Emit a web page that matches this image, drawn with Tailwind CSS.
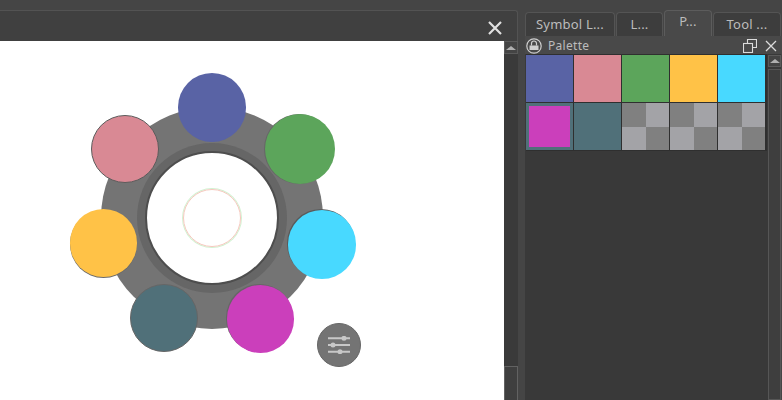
<!DOCTYPE html>
<html lang="en">
<head>
    <meta charset="UTF-8">
    <title>Palette</title>
    <script src="https://cdn.jsdelivr.net/npm/@tailwindcss/browser@4"></script>
</head>
<body class="bg-[#454545] overflow-hidden">
    <div class="w-[782px] h-[400px] flex pt-[10px] font-['Noto_Sans',sans-serif] text-[#bcbcbc]">
        <!-- Left document -->
        <div class="w-[518px] flex flex-col">
            <div class="h-[31px] shrink-0 flex items-center justify-end pr-[14px] bg-[#404040] border-t border-r border-[#535353] rounded-tr-[3px]">
                <svg class="w-[16px] h-[16px] mt-[3px]" viewBox="0 0 16 16"><path d="M2 2L14 14M14 2L2 14" stroke="#e0e0e0" stroke-width="2.200"/></svg>
            </div>
            <div class="flex-1 flex min-h-0">
                <!-- Canvas with the colour selector -->
                <div class="relative w-[504px] bg-white">
                    <div class="absolute left-[101px] top-[66px] w-[222px] h-[222px] rounded-full bg-[#747474]"></div>
                    <div class="absolute left-[137px] top-[102px] w-[150px] h-[150px] rounded-full bg-[#666666]"></div>
                    <div class="absolute left-[145px] top-[110px] w-[134px] h-[134px] rounded-full bg-white border-[2px] border-[#4e4e4e]"></div>
                    <div class="absolute left-[183px] top-[148px] w-[58px] h-[58px] rounded-full border border-[#f6c8be] shadow-[0_0_0_1px_#d2f2d2]"></div>

                    <div class="absolute left-[178px] top-[32px] w-[68px] h-[69px] rounded-full bg-[#5963a5]"></div>
                    <div class="absolute left-[265px] top-[73px] w-[70px] h-[70px] rounded-full bg-[#5ca55b] shadow-[-1px_0_0_#666666]"></div>
                    <div class="absolute left-[288px] top-[169px] w-[68px] h-[69px] rounded-full bg-[#48d9ff] shadow-[-1px_-1px_0_#5a5a5a]"></div>
                    <div class="absolute left-[227px] top-[244px] w-[67px] h-[68px] rounded-full bg-[#cb3fbb] shadow-[-1px_-1px_0_#666666]"></div>
                    <div class="absolute left-[130px] top-[243px] w-[68px] h-[68px] rounded-full bg-[#507079] border border-[#666666]"></div>
                    <div class="absolute left-[70px] top-[168px] w-[67px] h-[68px] rounded-full bg-[#ffc247] shadow-[0_1px_0_#6a6a6a]"></div>
                    <div class="absolute left-[91px] top-[74px] w-[68px] h-[68px] rounded-full bg-[#d98994] border border-[#5c5c5c]"></div>

                    <div class="absolute left-[317px] top-[282px] w-[44px] h-[44px] rounded-full bg-[#747474] border border-[#666666] flex items-center justify-center">
                        <svg class="w-[22px] h-[18px]" viewBox="0 0 22 18">
                            <g stroke="#c8c8c8" stroke-width="2"><path d="M0 2.300H22M0 9H22M0 15.700H22"/></g>
                            <g fill="#c8c8c8"><circle cx="16" cy="2.300" r="2.500"/><circle cx="5" cy="9" r="2.500"/><circle cx="12" cy="15.700" r="2.500"/></g>
                        </svg>
                    </div>
                </div>
                <!-- Canvas scrollbar -->
                <div class="w-[14px] bg-[#3a3a3a] flex flex-col">
                    <div class="h-[13px] flex items-center justify-center border border-[#5a5a5a] bg-[#444444]">
                        <div class="w-0 h-0 border-x-[5px] border-x-transparent border-b-[4px] border-b-[#b0b0b0]"></div>
                    </div>
                    <div class="h-[34px] mt-auto border border-b-0 border-[#626262] bg-[#3f3f3f]"></div>
                </div>
            </div>
        </div>

        <!-- Right dock -->
        <div class="ml-[7px] w-[257px] flex flex-col">
            <div class="h-[26px] shrink-0 flex items-end gap-px text-[13px] tracking-[0.2px]">
                <div class="w-[90px] h-[24px] flex items-center justify-center bg-[#3d3d3d] border border-b-0 border-[#545454] rounded-t-[4px]">Symbol L...</div>
                <div class="w-[47px] h-[24px] flex items-center justify-center bg-[#3d3d3d] border border-b-0 border-[#545454] rounded-t-[4px]">L...</div>
                <div class="w-[48px] h-[26px] pb-[3px] flex items-center justify-center bg-[#494949] border border-b-0 border-[#5c5c5c] rounded-t-[4px]">P...</div>
                <div class="w-[68px] h-[24px] flex items-center justify-center bg-[#3d3d3d] border border-b-0 border-[#545454] rounded-t-[4px]">Tool ...</div>
            </div>
            <div class="h-[18px] shrink-0 pt-px flex items-center bg-[#494949] text-[12px] tracking-[0.3px]">
                <svg class="w-[16px] h-[16px] ml-px" viewBox="0 0 16 16">
                    <circle cx="8" cy="8" r="7.200" fill="none" stroke="#cfcfcf" stroke-width="1.200"/>
                    <path d="M5.500 7.500V5.500a2.500 2.500 0 0 1 5 0V7.500" fill="none" stroke="#cfcfcf" stroke-width="1.200"/>
                    <rect x="3.500" y="7.500" width="9" height="4.500" fill="#cfcfcf"/>
                </svg>
                <span class="ml-[6px]">Palette</span>
                <svg class="w-[14px] h-[14px] ml-auto" viewBox="0 0 14 14" fill="none" stroke="#dcdcdc" stroke-width="1.100">
                    <path d="M4.500 4.500V0.500H13.500V8.500H9.500"/><rect x="0.500" y="4.500" width="9" height="9"/>
                </svg>
                <svg class="w-[12px] h-[12px] ml-[8px] mr-[5px]" viewBox="0 0 12 12"><path d="M1 1L11 11M11 1L1 11" stroke="#dcdcdc" stroke-width="1.300"/></svg>
            </div>
            <div class="flex-1 flex bg-[#393939] min-h-0">
                <div class="w-[241px] ml-px">
                    <div class="grid grid-cols-[repeat(5,47px)] auto-rows-[47px] gap-px bg-[#2f2f2f] py-px">
                        <div class="bg-[#5963a5]"></div>
                        <div class="bg-[#d98994]"></div>
                        <div class="bg-[#5ca55b]"></div>
                        <div class="bg-[#ffc247]"></div>
                        <div class="bg-[#48d9ff]"></div>
                        <div class="bg-[#507079] p-[3px]"><div class="w-full h-full bg-[#cb3fbb]"></div></div>
                        <div class="bg-[#507079]"></div>
                        <div class="grid grid-cols-2 grid-rows-2">
                            <div class="bg-[#808080]"></div><div class="bg-[#a3a3a7]"></div><div class="bg-[#a3a3a7]"></div><div class="bg-[#808080]"></div>
                        </div>
                        <div class="grid grid-cols-2 grid-rows-2">
                            <div class="bg-[#808080]"></div><div class="bg-[#a3a3a7]"></div><div class="bg-[#a3a3a7]"></div><div class="bg-[#808080]"></div>
                        </div>
                        <div class="grid grid-cols-2 grid-rows-2">
                            <div class="bg-[#808080]"></div><div class="bg-[#a3a3a7]"></div><div class="bg-[#a3a3a7]"></div><div class="bg-[#808080]"></div>
                        </div>
                    </div>
                </div>
                <!-- Palette scrollbar -->
                <div class="w-[13px] ml-[1px] pt-px flex flex-col gap-[2px] bg-[#393939]">
                    <div class="h-[12px] shrink-0 flex items-center justify-center border border-[#5a5a5a] bg-[#444444]">
                        <div class="w-0 h-0 border-x-[5px] border-x-transparent border-b-[4px] border-b-[#b0b0b0]"></div>
                    </div>
                    <div class="flex-1 border border-[#565656] bg-[#3e3e3e]"></div>
                </div>
                <div class="w-[1px] bg-[#454545]"></div>
            </div>
        </div>
    </div>
</body>
</html>
